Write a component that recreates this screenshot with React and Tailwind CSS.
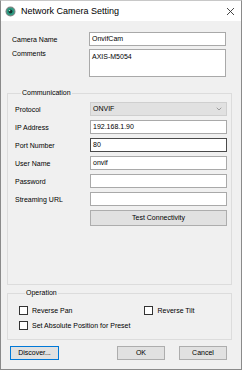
import { ChevronDown } from "lucide-react";

const font = { fontFamily: '"Liberation Sans", Arial, sans-serif' };

function Field({ value = "", dark = false, className = "" }) {
  return (
    <div
      className={`h-[14px] w-[137px] bg-white border flex items-center pl-[2px] text-[7px] text-black ${dark ? "border-[#4a4a4a]" : "border-[#a9a9a9]"} ${className}`}
    >
      {value}
    </div>
  );
}

function Row({ label, children }) {
  return (
    <div className="flex items-center">
      <span className="w-[75px] text-[7px] leading-[9px]">{label}</span>
      {children}
    </div>
  );
}

function Check({ label, className = "" }) {
  return (
    <div className={`flex items-center ${className}`}>
      <span className="w-[9px] h-[9px] bg-white border border-[#333]" />
      <span className="ml-[4px] text-[7px] leading-[9px]">{label}</span>
    </div>
  );
}

function Btn({ children, focus = false, className = "" }) {
  return (
    <div
      className={`h-[14px] bg-[#e1e1e1] border flex items-center justify-center text-[7px] ${focus ? "border-[#0078d7]" : "border-[#adadad]"} ${className}`}
    >
      {children}
    </div>
  );
}

function CameraIcon() {
  return (
    <svg width="11" height="11" viewBox="0 0 11 11">
      <circle cx="5.5" cy="5.5" r="5" fill="#7d8785" />
      <circle cx="5.5" cy="5.5" r="3.8" fill="#2a9c82" />
      <circle cx="5.5" cy="5.5" r="2" fill="#143631" />
      <circle cx="4.6" cy="4.6" r="0.7" fill="#cfeee6" />
    </svg>
  );
}

export default function App() {
  return (
    <div
      className="w-[242px] h-[370px] border border-[#8a8a8a] border-t-[#c8c8c8] flex flex-col text-black overflow-hidden"
      style={font}
    >
      {/* title bar */}
      <div className="h-[20px] bg-white flex items-center pl-[4px] pr-[4px] shrink-0">
        <CameraIcon />
        <span className="ml-[5px] text-[9px] leading-[11px]">Network Camera Setting</span>
        <svg className="ml-auto mr-[2px]" width="9" height="9" viewBox="0 0 9 9">
          <path d="M1 1 L8 8 M8 1 L1 8" stroke="#333" strokeWidth="0.9" />
        </svg>
      </div>

      {/* body */}
      <div className="flex-1 bg-[#f0f0f0] pl-[11px] pr-[14px] pt-[11px]">
        <Row label="Camera Name">
          <Field value="OnvifCam" className="ml-[2px]" />
        </Row>
        <div className="flex items-start mt-[3px]">
          <span className="w-[75px] text-[7px] leading-[9px]">Comments</span>
          <div className="ml-[2px] h-[28px] w-[137px] bg-white border border-[#a9a9a9] pl-[2px] pt-[2px] text-[7px] leading-[9px]">
            AXIS-M5054
          </div>
        </div>

        <fieldset className="mt-[11px] -ml-[5px] w-[225px] border border-[#dcdcdc] pl-[7px] pr-[4px] pb-[58px]">
          <legend className="ml-[6px] px-[1px] text-[7px] leading-[10px]">Communication</legend>
          <div className="flex flex-col gap-[4px] mt-[4px]">
            <Row label="Protocol">
              <div className="h-[14px] w-[137px] bg-[#e1e1e1] border border-[#cfcfcf] flex items-center pl-[2px] text-[7px]">
                ONVIF
                <ChevronDown className="ml-auto mr-[3px] w-[8px] h-[8px] text-[#555]" strokeWidth={1.5} />
              </div>
            </Row>
            <Row label="IP Address">
              <Field value="192.168.1.90" />
            </Row>
            <Row label="Port Number">
              <Field value="80" dark />
            </Row>
            <Row label="User Name">
              <Field value="onvif" />
            </Row>
            <Row label="Password">
              <Field />
            </Row>
            <Row label="Streaming URL">
              <Field />
            </Row>
            <div className="flex">
              <Btn className="ml-[75px] w-[137px] h-[16px]">Test Connectivity</Btn>
            </div>
          </div>
        </fieldset>

        <fieldset className="mt-[3px] -ml-[5px] w-[225px] border border-[#dcdcdc] pl-[11px] pb-[9px]">
          <legend className="ml-[6px] px-[1px] text-[7px] leading-[10px]">Operation</legend>
          <div className="flex flex-col gap-[6px] mt-[8px]">
            <div className="flex">
              <Check label="Reverse Pan" />
              <Check label="Reverse Tilt" className="ml-[72px]" />
            </div>
            <Check label="Set Absolute Position for Preset" />
          </div>
        </fieldset>

        <div className="flex mt-[6px] -ml-[2px]">
          <Btn focus className="w-[50px]">Discover...</Btn>
          <Btn className="w-[49px] ml-[58px]">OK</Btn>
          <Btn className="w-[49px] ml-[14px]">Cancel</Btn>
        </div>
      </div>
    </div>
  );
}
